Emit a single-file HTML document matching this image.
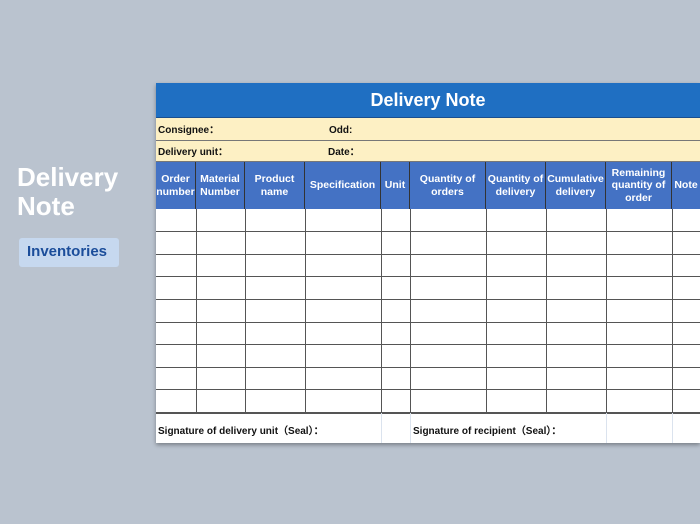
<!DOCTYPE html>
<html><head><style>
body{margin:0;width:700px;height:524px;background:#bac3cf;position:relative;overflow:hidden;font-family:"Liberation Sans",Arial,sans-serif}
.lt{position:absolute;left:17px;top:163px;color:#fff;font-weight:bold;font-size:26px;line-height:29px}
.tag{position:absolute;left:19px;top:238px;width:100px;height:29px;background:#c6d8ef;border-radius:3px;color:#1b4d9a;font-size:15px;line-height:27px;text-indent:8px;font-weight:bold}
.sheet{position:absolute;left:156px;top:83px;width:544px;height:360px;background:#fff;box-shadow:0 2px 4px rgba(0,0,0,.35)}
.ttl{position:absolute;left:0;top:0;width:544px;height:35px;background:#1f6fc2;color:#fff;font-weight:bold;font-size:18px;line-height:35px;text-align:center;border-bottom:1px solid #1a4f8f;box-sizing:border-box}
.y{position:absolute;left:0;width:544px;background:#fdf0c4;border-bottom:1px solid #777;box-sizing:border-box;font-size:10px;font-weight:bold;color:#111}
.y span{position:absolute;line-height:12px;height:12px;display:block}
.hd{position:absolute;top:79px;height:47px;background:#4472c4;color:#fff;font-size:10.5px;font-weight:bold;text-align:center;display:flex;align-items:center;justify-content:center;line-height:12.5px;border-right:1.5px solid #333;box-sizing:border-box}
.v{position:absolute;top:126px;height:203px;width:1px;background:#555}
.h{position:absolute;left:0;width:544px;height:1px;background:#555}
.sig{position:absolute;font-size:10px;font-weight:bold;color:#111;line-height:12px}
.sv{position:absolute;top:330px;height:30px;width:1px;background:#dbe3ee}
</style></head><body>
<div class="lt">Delivery<br>Note</div>
<div class="tag">Inventories</div>
<div class="sheet">
<div class="ttl">Delivery Note</div>
<div class="y" style="top:35px;height:23px"><span style="left:2px;top:7px">Consignee：</span><span style="left:173px;top:7px">Odd:</span></div>
<div class="y" style="top:58px;height:21px"><span style="left:2px;top:6px">Delivery unit：</span><span style="left:172px;top:6px">Date：</span></div>
<div class="hd" style="left:0;width:40px">Order<br>number</div>
<div class="hd" style="left:40px;width:49px">Material<br>Number</div>
<div class="hd" style="left:89px;width:60px">Product<br>name</div>
<div class="hd" style="left:149px;width:76px">Specification</div>
<div class="hd" style="left:225px;width:29px">Unit</div>
<div class="hd" style="left:254px;width:76px">Quantity of<br>orders</div>
<div class="hd" style="left:330px;width:60px">Quantity of<br>delivery</div>
<div class="hd" style="left:390px;width:60px">Cumulative<br>delivery</div>
<div class="hd" style="left:450px;width:66px">Remaining<br>quantity of<br>order</div>
<div class="hd" style="left:516px;width:28px;border-right:none">Note</div>
<div class="v" style="left:40px"></div><div class="v" style="left:89px"></div><div class="v" style="left:149px"></div><div class="v" style="left:225px"></div><div class="v" style="left:254px"></div><div class="v" style="left:330px"></div><div class="v" style="left:390px"></div><div class="v" style="left:450px"></div><div class="v" style="left:516px"></div>
<div class="h" style="top:148px"></div><div class="h" style="top:171px"></div><div class="h" style="top:193px"></div><div class="h" style="top:216px"></div><div class="h" style="top:239px"></div><div class="h" style="top:261px"></div><div class="h" style="top:284px"></div><div class="h" style="top:306px"></div><div class="h" style="top:329px;height:2px"></div>
<div class="sv" style="left:225px"></div><div class="sv" style="left:254px"></div><div class="sv" style="left:450px"></div><div class="sv" style="left:516px"></div>
<div class="sig" style="left:2px;top:343px">Signature of delivery unit（Seal）：</div>
<div class="sig" style="left:257px;top:343px">Signature of recipient（Seal）：</div>
</div>
</body></html>
